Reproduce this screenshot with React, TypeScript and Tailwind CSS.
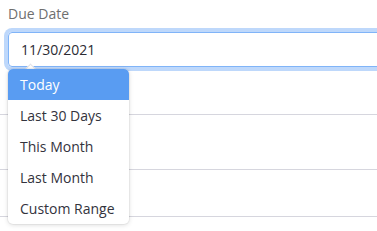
import React from "react";

const items = ["Today", "Last 30 Days", "This Month", "Last Month", "Custom Range"];

export default function App() {
  return (
    <div
      className="relative w-[377px] h-[231px] overflow-hidden bg-white"
      style={{ fontFamily: '"Open Sans", sans-serif' }}
    >
      <div className="pt-[4px] pl-[8px]">
        <div className="text-[14px] leading-[20px] text-[#6f6f6f]">Due Date</div>
        <div className="mt-[8px] w-[420px] h-[35px] rounded-[4px] border border-[#80b4f8] ring-4 ring-[#bed8fb] flex items-center pl-[12px] text-[14px] text-[#2b2b33]">
          11/30/2021
        </div>
      </div>
      <div className="mt-[47px] border-t border-[#d6d6de]" />
      <div className="h-[55px] border-b border-[#d6d6de]" />
      <div className="h-[47px] border-b border-[#d6d6de]" />

      <div className="absolute left-[27px] top-[65px] w-[7px] h-[7px] rotate-45 bg-white border-l border-t border-[#e3e3e8] z-10" />
      <div className="absolute left-[8px] top-[69px] w-[121px] rounded-[5px] bg-white shadow-[0_1px_5px_rgba(0,0,0,0.14),0_0_0_1px_rgba(0,0,0,0.04)] overflow-hidden z-20">
        {items.map((it, i) => (
          <div
            key={it}
            className={
              i === 0
                ? "h-[31px] flex items-center pl-[12px] text-[14px] bg-[#599cf2] text-white"
                : "h-[31px] flex items-center pl-[12px] text-[14px] text-[#33333d]"
            }
          >
            {it}
          </div>
        ))}
      </div>
    </div>
  );
}
